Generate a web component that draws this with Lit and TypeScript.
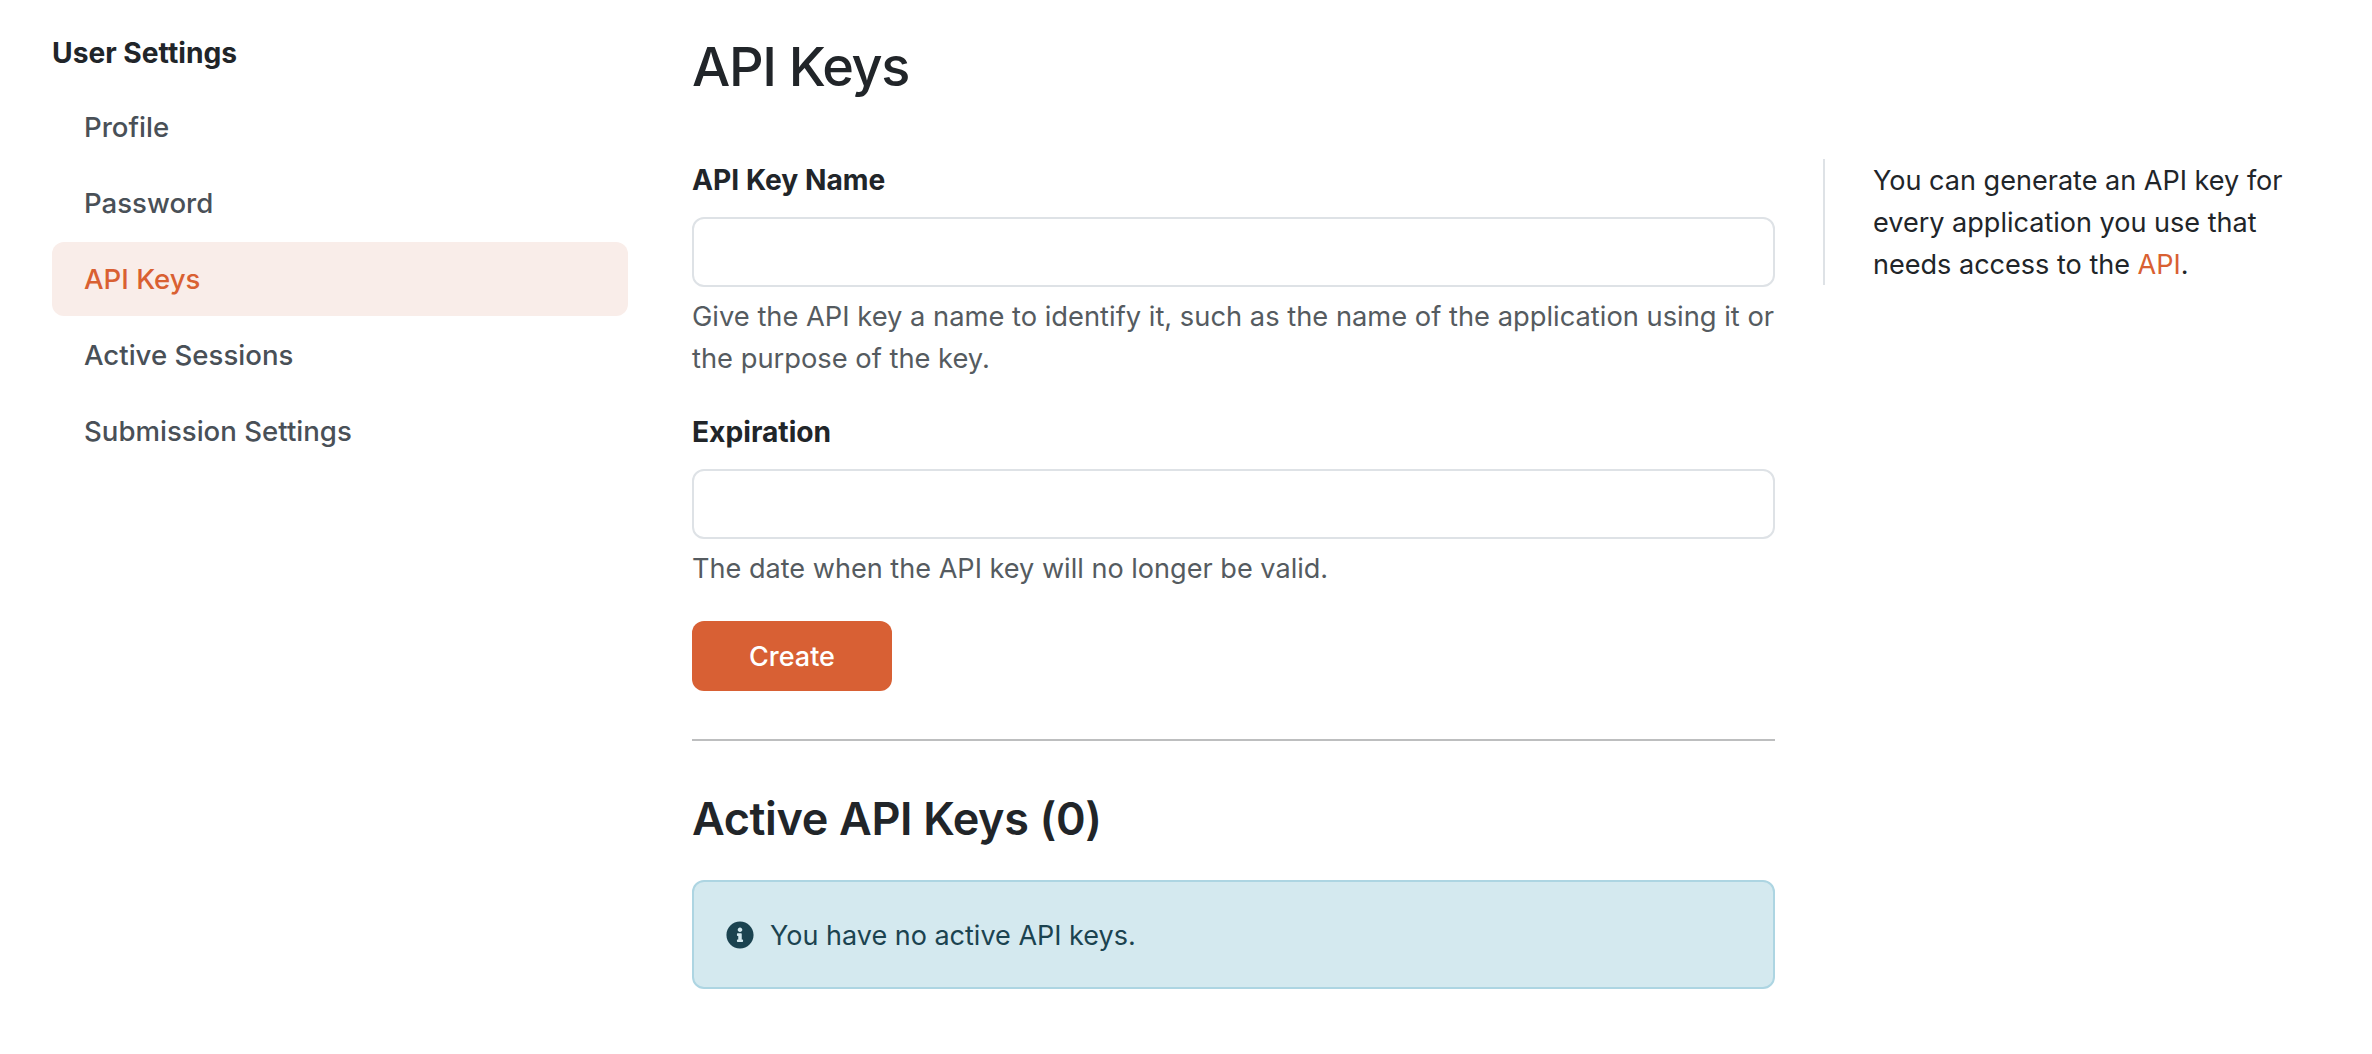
import { LitElement, html, css } from "lit";
import { customElement } from "lit/decorators.js";

@customElement("app-root")
export class AppRoot extends LitElement {
  static styles = css`
    :host {
      display: flex;
      box-sizing: border-box;
      width: 2372px;
      height: 1054px;
      background: #fff;
      overflow: hidden;
      padding: 32px 0 0 52px;
      font-family: Inter, "Liberation Sans", sans-serif;
      font-size: 27px;
      line-height: 42px;
      color: #212529;
    }
    * { box-sizing: border-box; }
    .sidebar { width: 576px; flex: none; margin-right: 64px; }
    .side-title { font-weight: 700; font-size: 28.2px; margin-bottom: 16px; }
    .nav { display: flex; flex-direction: column; gap: 2px; }
    .nav a {
      display: flex;
      align-items: center;
      height: 74px;
      padding-left: 32px;
      border-radius: 12px;
      color: #495057;
      font-weight: 500;
      font-size: 27.6px;
    }
    .nav a.active { background: #f9ede9; color: #d96032; }
    .main { width: 1083px; flex: none; }
    h1 { margin: 2px 0 59px; font-size: 54px; line-height: 66px; font-weight: 500; letter-spacing: -1.35px; }
    .form { width: 1083px; flex: none; }
    label { display: block; font-weight: 700; font-size: 28.2px; margin-bottom: 16px; }
    input {
      display: block;
      width: 100%;
      height: 70px;
      border: 2px solid #dee2e6;
      border-radius: 12px;
      background: #fff;
      outline: none;
    }
    .hint { margin-top: 9px; font-size: 27.3px; color: #555b60; }
    .hint.short { font-size: 27.1px; }
    .field { margin-bottom: 31px; }
    button {
      display: block;
      width: 200px;
      height: 70px;
      padding: 2px 0 0;
      border: none;
      border-radius: 12px;
      background: #d86034;
      color: #fff;
      font: inherit;
      font-weight: 500;
    }
    hr { height: 2px; margin: 48px 0 49px; border: none; background: #bdbebf; }
    h2 { margin: 0 0 32px; font-size: 45px; line-height: 58px; font-weight: 600; letter-spacing: -0.35px; }
    .alert {
      display: flex;
      align-items: center;
      gap: 16px;
      height: 109px;
      padding: 0 32px;
      border: 2px solid #add5e2;
      border-radius: 12px;
      background: #d4e9ef;
      color: #1b4350;
    }
    .alert svg { width: 28px; height: 28px; fill: currentColor; flex: none; }
    .alert span { padding-top: 2px; }
    .aside {
      margin: 127px 0 0 48px;
      width: 490px;
      flex: none;
      height: 126px;
      padding-left: 48px;
      border-left: 2px solid #dee2e6;
    }
    .aside p { margin: 0; padding-top: 1px; font-size: 27.05px; }
    .aside a { color: #d96032; }
    .wrapper { display: flex; align-items: flex-start; }
  `;

  render() {
    const items = ["Profile", "Password", "API Keys", "Active Sessions", "Submission Settings"];
    return html`
      <div class="sidebar">
        <div class="side-title">User Settings</div>
        <div class="nav">
          ${items.map((i) => html`<a class=${i === "API Keys" ? "active" : ""}>${i}</a>`)}
        </div>
      </div>
      <div class="wrapper">
        <div class="main">
          <h1>API Keys</h1>
          <div class="form">
            <div class="field">
              <label>API Key Name</label>
              <input type="text" />
              <div class="hint">Give the API key a name to identify it, such as the name of the application using it or the purpose of the key.</div>
            </div>
            <div class="field">
              <label>Expiration</label>
              <input type="text" />
              <div class="hint short">The date when the API key will no longer be valid.</div>
            </div>
            <button>Create</button>
            <hr />
            <h2>Active API Keys (0)</h2>
            <div class="alert">
              <svg viewBox="0 0 512 512"><path d="M256 8C119.043 8 8 119.083 8 256c0 136.997 111.043 248 248 248s248-111.003 248-248C504 119.083 392.957 8 256 8zm0 110c23.196 0 42 18.804 42 42s-18.804 42-42 42-42-18.804-42-42 18.804-42 42-42zm56 254c0 6.627-5.373 12-12 12h-88c-6.627 0-12-5.373-12-12v-24c0-6.627 5.373-12 12-12h12v-64h-12c-6.627 0-12-5.373-12-12v-24c0-6.627 5.373-12 12-12h64c6.627 0 12 5.373 12 12v100h12c6.627 0 12 5.373 12 12v24z"/></svg>
              <span>You have no active API keys.</span>
            </div>
          </div>
        </div>
        <div class="aside">
          <p>You can generate an API key for every application you use that needs access to the <a>API</a>.</p>
        </div>
      </div>
    `;
  }
}
